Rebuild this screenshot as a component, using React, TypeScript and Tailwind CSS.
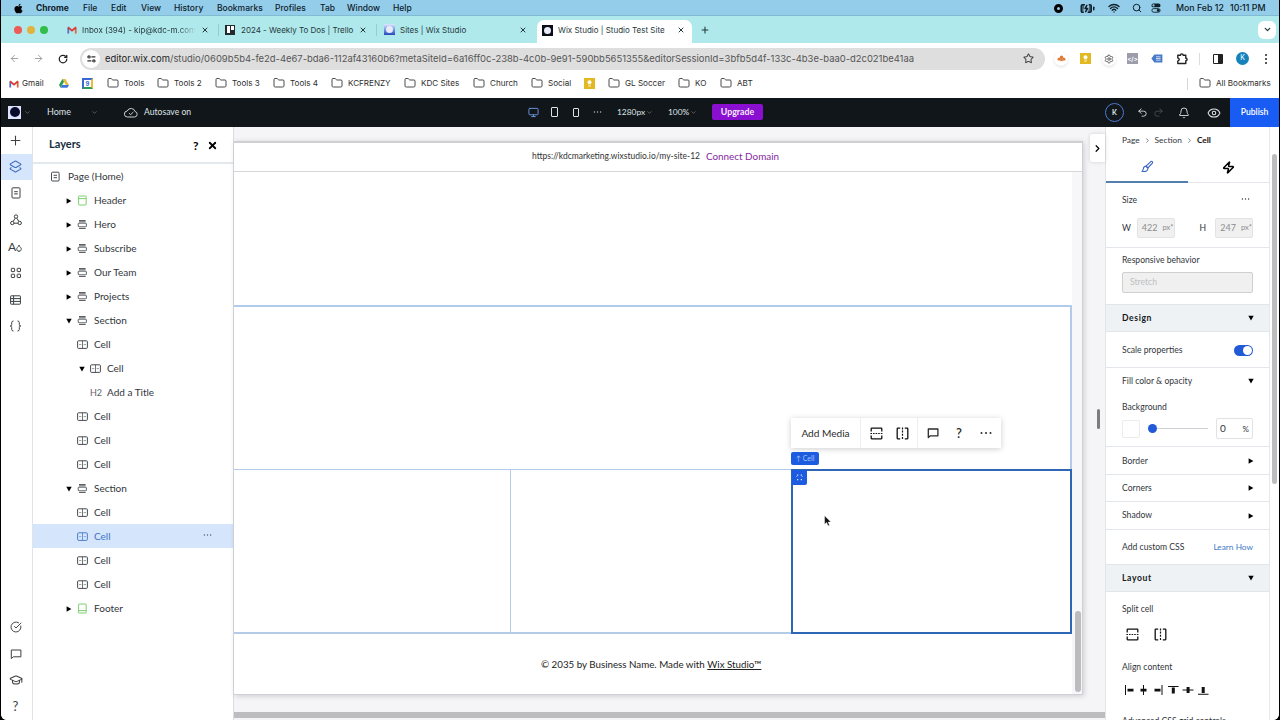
import type { ReactNode } from 'react';
import {
  ArrowLeft,
  ArrowRight,
  Bell,
  BatteryCharging,
  ChevronDown,
  ChevronRight,
  CircleCheckBig,
  Droplet,
  Eye,
  Folder,
  GraduationCap,
  Layers2,
  Lightbulb,
  Monitor,
  Plus,
  RotateCw,
  Search,
  Settings,
  Star,
  Undo2,
  Redo2,
  Wifi,
  X,
  Zap,
} from 'lucide-react';
import { FaApple } from 'react-icons/fa';

type LayerKind = 'page' | 'header' | 'section' | 'cell' | 'title' | 'footer';

interface Layer {
  label: string;
  kind: LayerKind;
  open?: boolean;
  arrow?: boolean;
  nested?: boolean;
  selected?: boolean;
}

const LAYERS: Layer[] = [
  { label: 'Header', kind: 'header', arrow: true },
  { label: 'Hero', kind: 'section', arrow: true },
  { label: 'Subscribe', kind: 'section', arrow: true },
  { label: 'Our Team', kind: 'section', arrow: true },
  { label: 'Projects', kind: 'section', arrow: true },
  { label: 'Section', kind: 'section', arrow: true, open: true },
  { label: 'Cell', kind: 'cell' },
  { label: 'Cell', kind: 'cell', arrow: true, open: true, nested: true },
  { label: 'Add a Title', kind: 'title', nested: true },
  { label: 'Cell', kind: 'cell' },
  { label: 'Cell', kind: 'cell' },
  { label: 'Cell', kind: 'cell' },
  { label: 'Section', kind: 'section', arrow: true, open: true },
  { label: 'Cell', kind: 'cell' },
  { label: 'Cell', kind: 'cell', selected: true },
  { label: 'Cell', kind: 'cell' },
  { label: 'Cell', kind: 'cell' },
  { label: 'Footer', kind: 'footer', arrow: true },
];

const MENU = [
  { label: 'Chrome', cls: 'w-[47px] font-bold' },
  { label: 'File', cls: 'w-[28px]' },
  { label: 'Edit', cls: 'w-[30px]' },
  { label: 'View', cls: 'w-[33px]' },
  { label: 'History', cls: 'w-[43px]' },
  { label: 'Bookmarks', cls: 'w-[58px]' },
  { label: 'Profiles', cls: 'w-[45px]' },
  { label: 'Tab', cls: 'w-[27px]' },
  { label: 'Window', cls: 'w-[46px]' },
  { label: 'Help', cls: 'w-[30px]' },
];

const FOLDERS_LEFT = [
  { label: 'Tools', cls: 'w-[50px]' },
  { label: 'Tools 2', cls: 'w-[58px]' },
  { label: 'Tools 3', cls: 'w-[58px]' },
  { label: 'Tools 4', cls: 'w-[58px]' },
  { label: 'KCFRENZY', cls: 'w-[73px]' },
  { label: 'KDC Sites', cls: 'w-[69px]' },
  { label: 'Church', cls: 'w-[58px]' },
  { label: 'Social', cls: 'w-[52px]' },
];

const FOLDERS_RIGHT = [
  { label: 'GL Soccer', cls: 'w-[70px]' },
  { label: 'KO', cls: 'w-[42px]' },
  { label: 'ABT', cls: 'w-[40px]' },
];

function Triangle({ open }: { open?: boolean }) {
  return (
    <svg width="6" height="6" viewBox="0 0 6 6" className="shrink-0 fill-black">
      {open ? <path d="M.3 .8h5.4L3 5.6z" /> : <path d="M.6 .3v5.4L5.4 3z" />}
    </svg>
  );
}

function Dots({ className = '' }: { className?: string }) {
  return (
    <svg width="9" height="4" viewBox="0 0 9 4" className={`shrink-0 fill-current ${className}`}>
      <circle cx="1.4" cy="2" r="0.7" />
      <circle cx="4.5" cy="2" r="0.7" />
      <circle cx="7.6" cy="2" r="0.7" />
    </svg>
  );
}

function ChatIcon({ bold }: { bold?: boolean }) {
  return (
    <svg width="12" height="12" viewBox="0 0 12 12" fill="none" stroke="currentColor" strokeWidth={bold ? 1.3 : 1} strokeLinejoin="round">
      <path d="M1.3 10.600V2h9.600v6.800H3.300z" />
    </svg>
  );
}

function LayerIcon({ kind }: { kind: LayerKind }) {
  if (kind === 'title') return <span className="text-[9px] text-[#5f6368]">H2</span>;
  return (
    <svg width="11" height="11" viewBox="0 0 11 11" fill="none" stroke="currentColor" strokeWidth="0.9" className="shrink-0">
      {kind === 'page' && (
        <>
          <rect x="1.5" y="1.2" width="7.6" height="8.8" rx="1" />
          <path d="M3.6 4.3h3.4M3.6 6.7h3.4" />
        </>
      )}
      {kind === 'header' && (
        <g stroke="#6fc95d">
          <rect x="1.6" y="1" width="7.6" height="9" rx="0.6" />
          <path d="M1.6 3.6h7.6" />
        </g>
      )}
      {kind === 'footer' && (
        <g stroke="#6fc95d">
          <rect x="1.6" y="1" width="7.6" height="9" rx="0.6" />
          <path d="M1.6 7.6h7.6" />
        </g>
      )}
      {kind === 'section' && (
        <g strokeWidth="0.8">
          <rect x="1.2" y="4.2" width="8.2" height="3.6" rx="0.8" />
          <path d="M2 1.500h6.600M2 2.800h6.600M2 9.500h6.600" />
        </g>
      )}
      {kind === 'cell' && (
        <>
          <rect x="0.6" y="1.8" width="9.8" height="7.6" rx="1" />
          <path d="M5.5 1.8v7.6" strokeWidth="0.7" />
          <path d="M2 5.6h2.4M6.6 5.6h2.4" strokeWidth="0.5" />
        </>
      )}
    </svg>
  );
}

function SplitRows() {
  return (
    <svg width="13" height="13" viewBox="0 0 13 13" fill="none" stroke="#111" strokeWidth="1.3">
      <path d="M1.2 4.4V1.7q0-.5.5-.5h9.6q.5 0 .5.5v2.7M1.2 8.6v2.7q0 .5.5.5h9.6q.5 0 .5-.5V8.6" />
      <path d="M.4 6.5h12.2" strokeDasharray="1.6 1" strokeWidth="1.1" />
    </svg>
  );
}

function SplitColumns() {
  return (
    <svg width="13" height="13" viewBox="0 0 13 13" fill="none" stroke="#111" strokeWidth="1.3">
      <path d="M4.2 1.2H1.7q-.5 0-.5.5v9.6q0 .5.5.5h2.5M8.8 1.2h2.5q.5 0 .5.5v9.6q0 .5-.5.5H8.8" />
      <path d="M6.5 .4v12.2" strokeDasharray="2 1.2" strokeWidth="1.2" />
    </svg>
  );
}

function GmailIcon() {
  return (
    <svg width="10" height="8" viewBox="0 0 11 9" fill="none" strokeWidth="2" className="shrink-0">
      <path d="M1.3 8.5V1.8" stroke="#5a6fc4" />
      <path d="M9.7 8.5V1.8" stroke="#d8683f" />
      <path d="M1 1.4l4.5 3.8L10 1.4" stroke="#d93a36" />
    </svg>
  );
}

function WixFavicon({ dark }: { dark?: boolean }) {
  return (
    <span className={`flex h-[11px] w-[11px] shrink-0 items-center justify-center ${dark ? 'bg-[#0b0d18]' : 'bg-linear-to-b from-[#dfe9ff] to-[#2546bb]'}`}>
      <span className="h-[7px] w-[7px] rounded-full bg-[#e9ebf8]" />
    </span>
  );
}

function FolderLink({ label, cls }: { label: string; cls: string }) {
  return (
    <span className={`flex shrink-0 items-center gap-[5px] whitespace-nowrap ${cls}`}>
      <Folder size={12} strokeWidth={2} className="shrink-0 text-[#4a4a4a]" />
      {label}
    </span>
  );
}

function MenuBar() {
  return (
    <div className="flex h-4 shrink-0 items-center border-b border-[#7fbcd2] bg-[#93cde9] pt-[1px] pl-[12px] text-[8.5px] font-medium text-[#10202b]">
      <FaApple size={11} className="mr-3 shrink-0 text-black" />
      {MENU.map((m) => (
        <span key={m.label} className={`shrink-0 ${m.cls}`}>
          {m.label}
        </span>
      ))}
      <div className="ml-auto flex items-center pr-[12px] whitespace-nowrap">
        <span className="mr-[17px] h-[9px] w-[9px] rounded-full border-[3px] border-black" />
        <BatteryCharging size={15} strokeWidth={2.4} className="mr-[13px] fill-[#10202b]/60" />
        <Wifi size={12} strokeWidth={2.8} className="mr-[12px]" />
        <Search size={10} strokeWidth={2.4} className="mr-[9px]" />
        <svg width="10" height="10" viewBox="0 0 10 10" className="mr-[15px]">
          <rect x="0.5" y="0.5" width="9" height="3.8" rx="1.9" fill="#10202b" />
          <rect x="0.9" y="5.6" width="8.2" height="3.6" rx="1.8" fill="none" stroke="#10202b" strokeWidth="0.9" />
          <circle cx="2.5" cy="2.4" r="1.1" fill="#93cde9" />
          <circle cx="7.2" cy="7.4" r="1.4" fill="#10202b" />
        </svg>
        <span className="w-[54px] text-[8.8px]">Mon Feb 12</span>
        <span className="w-[37px] text-[8.9px]">10:11 PM</span>
      </div>
    </div>
  );
}

function TabStrip() {
  return (
    <div className="flex h-[27px] shrink-0 items-center bg-[#afe9ec] pl-[13px] text-[8px] text-[#26383b]">
      <div className="flex w-[53px] gap-[5px]">
        <span className="h-2 w-2 rounded-full bg-[#ee5a55]" />
        <span className="h-2 w-2 rounded-full bg-[#e3b23e]" />
        <span className="h-2 w-2 rounded-full bg-[#32bd48]" />
      </div>
      <div className="flex h-3 w-[152px] items-center border-r border-[#8fd0d3]">
        <GmailIcon />
        <span className="ml-[5px] w-[114px] whitespace-nowrap [mask-image:linear-gradient(to_right,black_85%,transparent)]">
          Inbox (394) - kip@kdc-m.com
        </span>
        <X size={8} strokeWidth={3} className="ml-[5px]" />
      </div>
      <div className="flex h-3 w-[158px] items-center border-r border-[#8fd0d3] pl-[6px]">
        <span className="flex h-[10px] w-[10px] gap-[1px] bg-[#222a30] p-[1.5px]">
          <span className="h-[7px] w-[3px] bg-white" />
          <span className="h-[4px] w-[3px] bg-white" />
        </span>
        <span className="ml-[6px] w-[118px] whitespace-nowrap">2024 - Weekly To Dos | Trello</span>
        <X size={8} strokeWidth={3} />
      </div>
      <div className="flex w-[160px] items-center pl-[7px]">
        <WixFavicon />
        <span className="ml-[5px] w-[119px] whitespace-nowrap">Sites | Wix Studio</span>
        <X size={8} strokeWidth={3} />
      </div>
      <div className="mt-auto flex h-[23px] w-[155px] items-center rounded-t-[7px] bg-white pb-[3px] pl-[5px]">
        <WixFavicon dark />
        <span className="ml-[5px] w-[119px] whitespace-nowrap">Wix Studio | Studio Test Site</span>
        <X size={8} strokeWidth={3} />
      </div>
      <Plus size={10} strokeWidth={2.6} className="ml-2" />
      <span className="mr-[3px] ml-auto flex h-[18px] w-[18px] items-center justify-center rounded-[6px] bg-white">
        <ChevronDown size={9} strokeWidth={3.4} />
      </span>
    </div>
  );
}

function AddressBar() {
  return (
    <div className="flex h-[31px] shrink-0 items-center bg-white pl-[8px]">
      <ArrowLeft size={11} strokeWidth={2} className="text-[#9a9a9a]" />
      <ArrowRight size={11} strokeWidth={2} className="ml-[13px] text-[#9a9a9a]" />
      <RotateCw size={10} strokeWidth={3} className="ml-[14px] text-[#222]" />
      <div className="ml-[12px] flex h-[22px] w-[965px] items-center rounded-full bg-[#dedede] pl-[2px]">
        <span className="flex h-[18px] w-[18px] shrink-0 items-center justify-center rounded-full bg-white">
          <svg width="9" height="8" viewBox="0 0 9 8" fill="none" stroke="#333" strokeWidth="1.2">
            <circle cx="2" cy="1.9" r="1.1" />
            <path d="M4.4 1.9h4M.4 5.9h4" />
            <circle cx="6.9" cy="5.9" r="1.1" />
          </svg>
        </span>
        <span className="ml-[5px] w-[918px] pt-[1px] text-[9.43px] whitespace-nowrap text-[#555]">
          <span className="text-[#222]">editor.wix.com</span>
          /studio/0609b5b4-fe2d-4e67-bda6-112af43160b6?metaSiteId=6a16ff0c-238b-4c0b-9e91-590bb5651355&amp;editorSessionId=3bfb5d4f-133c-4b3e-baa0-d2c021be41aa
        </span>
        <Star size={11} strokeWidth={2.2} className="shrink-0 text-[#444]" />
      </div>
      <div className="ml-[9px] flex items-center">
        <span className="flex h-[14px] w-[14px] items-center justify-center rounded-full bg-white shadow">
          <svg width="9" height="7" viewBox="0 0 10 8" fill="#e07b39">
            <circle cx="5" cy="2.6" r="2" />
            <circle cx="2.2" cy="4.9" r="1.7" />
            <circle cx="7.8" cy="4.9" r="1.7" />
            <rect x="3.6" y="3" width="2.8" height="4" />
          </svg>
        </span>
        <span className="ml-[12px] flex h-[11px] w-[11px] items-center justify-center bg-[#e3b923] text-white">
          <Lightbulb size={7} fill="white" strokeWidth={2} />
        </span>
        <span className="ml-[11px] flex h-[14px] w-[14px] items-center justify-center rounded-full bg-white text-[#555] shadow">
          <Settings size={10} strokeWidth={2.2} />
        </span>
        <span className="ml-[11px] flex h-[11px] w-[11px] items-center justify-center bg-[#9c9cab] text-[6px] font-bold text-white">&lt;/&gt;</span>
        <svg width="12" height="9" viewBox="0 0 12 9" className="ml-[13px]">
          <path d="M3.4 .4h8v8h-8L.4 4.4z" fill="#4779c7" />
          <path d="M5 2.8h4.6M5 4.5h4.6M5 6.2h4.6" stroke="#e4eefc" strokeWidth="0.8" />
        </svg>
        <svg width="13" height="13" viewBox="0 0 13 13" fill="none" stroke="#222" strokeWidth="1.4" strokeLinejoin="round" className="ml-[13px]">
          <path d="M1.800 3.200h2.700a1.300 1.300 0 0 1 2.600 0h2.700v3a1.300 1.300 0 0 1 0 2.600v2.700H1.800V8.900a1.400 1.400 0 0 0 0-2.800z" />
        </svg>
        <span className="ml-[10px] h-3 w-px bg-[#dcdcdc]" />
        <span className="ml-[13px] h-[10px] w-[10px] rounded-[1px] border border-r-[5px] border-[#222]" />
        <span className="ml-[13px] flex h-[13px] w-[13px] items-center justify-center rounded-full bg-[#1583bb] text-[7px] text-white">K</span>
        <span className="ml-[16px] flex flex-col gap-[2px]">
          <span className="h-[2px] w-[2px] rounded-full bg-[#222]" />
          <span className="h-[2px] w-[2px] rounded-full bg-[#222]" />
          <span className="h-[2px] w-[2px] rounded-full bg-[#222]" />
        </span>
      </div>
    </div>
  );
}

function BookmarksBar() {
  return (
    <div className="flex h-[24px] shrink-0 items-center bg-white pb-[5px] pl-2 text-[8.1px] text-[#2e2e2e]">
      <GmailIcon />
      <span className="ml-[3px] w-[37px]">Gmail</span>
      <svg width="10" height="9" viewBox="0 0 10 9">
        <path d="M3.4 0h3.1L10 6H6.9z" fill="#e8bd3c" />
        <path d="M3.4 0L5 2.7 1.6 8.8 0 6z" fill="#2d9b55" />
        <path d="M3.2 6H10L8.4 8.8H1.6z" fill="#3f74dc" />
      </svg>
      <span className="ml-[13px] flex h-[11px] w-[11px] items-center justify-center border-2 border-t-[#3569d4] border-r-[#e8bd3c] border-b-[#2d9b55] border-l-[#3569d4] text-[6px] font-bold text-[#3569d4]">
        9
      </span>
      <div className="ml-[14px] flex">
        {FOLDERS_LEFT.map((f) => (
          <FolderLink key={f.label} {...f} />
        ))}
      </div>
      <span className="ml-[1px] flex h-[11px] w-[11px] items-center justify-center bg-[#e3b923] text-white">
        <Lightbulb size={7} fill="white" strokeWidth={2} />
      </span>
      <div className="ml-[13px] flex">
        {FOLDERS_RIGHT.map((f) => (
          <FolderLink key={f.label} {...f} />
        ))}
      </div>
      <span className="mr-[11px] ml-auto h-3 w-px bg-[#d6d6d6]" />
      <FolderLink label="All Bookmarks" cls="w-[80px]" />
    </div>
  );
}

function StudioBar() {
  return (
    <div className="flex h-[29px] shrink-0 items-center bg-[#11161a] pb-[1px] pl-[7px] font-['Lato',sans-serif] text-[9px] text-[#dfe3e6]">
      <span className="flex h-[13px] w-[13px] items-center justify-center bg-[#dfe3ff]">
        <span className="h-[10px] w-[10px] rounded-full bg-[#080b2a]" />
      </span>
      <ChevronDown size={7} className="ml-[3px] text-[#84898d]" />
      <span className="ml-[16px] w-[44px]">Home</span>
      <ChevronDown size={7} className="text-[#84898d]" />
      <svg width="14" height="11" viewBox="0 0 14 11" fill="none" stroke="currentColor" strokeWidth="0.9" className="ml-[26px]">
        <path d="M3.6 10h7a2.8 2.8 0 0 0 .5-5.5A4.2 4.2 0 0 0 3.2 4 3 3 0 0 0 3.6 10z" />
        <path d="M4.9 6l1.7 1.7L9.4 5" />
      </svg>
      <span className="ml-[6px] w-[384px] text-[8.6px]">Autosave on</span>
      <Monitor size={11} strokeWidth={2} className="text-[#6f9ae4]" />
      <span className="ml-[12px] h-[10px] w-[7px] rounded-[1px] border border-[#dfe3e6]" />
      <span className="ml-[15px] h-[9px] w-[6px] rounded-[1px] border border-[#dfe3e6]" />
      <Dots className="ml-[14px] text-[#b8bcc0]" />
      <span className="ml-[15px] w-[29px] text-[8.4px]">1280px</span>
      <ChevronDown size={7} className="text-[#84898d]" />
      <span className="ml-[15px] w-[22px] text-[8.4px]">100%</span>
      <ChevronDown size={7} className="text-[#84898d]" />
      <span className="ml-[15px] flex h-4 w-[51px] items-center justify-center rounded-[2px] bg-[#8a0fd0] text-[8.8px] font-bold text-[#f5e9fc]">Upgrade</span>
      <div className="ml-auto -mb-[1px] flex h-[29px] items-center">
        <span className="flex h-[19px] w-[19px] items-center justify-center rounded-full border-[1.5px] border-[#4c78cf] text-[7px] font-bold">K</span>
        <Undo2 size={11} strokeWidth={1.9} className="ml-[13px]" />
        <Redo2 size={11} strokeWidth={1.9} className="ml-[5px] text-[#4a5054]" />
        <Bell size={12} strokeWidth={1.8} className="ml-[14px]" />
        <Eye size={14} strokeWidth={1.8} className="ml-[17px]" />
        <span className="ml-[9px] flex h-full w-[49px] items-center justify-center bg-[#195cf4] text-[8.6px] font-semibold text-white">Publish</span>
      </div>
    </div>
  );
}

function RailItem({ children, active }: { children: ReactNode; active?: boolean }) {
  return (
    <span className={`flex h-[26.6px] items-center justify-center pr-[2px] ${active ? 'bg-[#d5e5fb] text-[#3e6bc0]' : 'text-[#3c4043]'}`}>{children}</span>
  );
}

function LeftRail() {
  return (
    <div className="flex w-[32px] shrink-0 flex-col border-r border-[#dfe3ea] bg-white">
      <RailItem><Plus size={15} strokeWidth={1.7} /></RailItem>
      <RailItem active><Layers2 size={13} strokeWidth={1.9} /></RailItem>
      <RailItem>
        <svg width="10" height="12" viewBox="0 0 10 12" fill="none" stroke="currentColor">
          <rect x="1" y="0.8" width="8" height="10.2" rx="0.8" />
          <path d="M3.2 4.7h3.6M3.2 6.9h3.6" />
        </svg>
      </RailItem>
      <RailItem>
        <svg width="12" height="12" viewBox="0 0 12 12" fill="none" stroke="currentColor">
          <circle cx="6" cy="2.6" r="1.7" />
          <circle cx="2.3" cy="9" r="1.7" />
          <circle cx="9.7" cy="9" r="1.7" />
          <path d="M5.2 4.2L3.1 7.5M6.8 4.2l2.1 3.3M4 9.2h4" />
        </svg>
      </RailItem>
      <RailItem>
        <span className="font-['Lato',sans-serif] text-[12px] leading-none">A</span>
        <Droplet size={8} strokeWidth={2.6} className="-ml-[1px] translate-y-[1px]" />
      </RailItem>
      <RailItem>
        <svg width="12" height="12" viewBox="0 0 12 12" fill="none" stroke="currentColor">
          <rect x="1.3" y="1.3" width="3.3" height="3.3" rx="0.5" />
          <rect x="7.2" y="1.3" width="3.3" height="3.3" rx="0.5" />
          <rect x="1.3" y="7.2" width="3.3" height="3.3" rx="0.5" />
          <rect x="7.2" y="7.2" width="3.3" height="3.3" rx="0.5" />
        </svg>
      </RailItem>
      <RailItem>
        <svg width="11" height="10" viewBox="0 0 11 10" fill="none" stroke="currentColor">
          <rect x="0.6" y="0.8" width="9.8" height="8.4" rx="0.5" />
          <path d="M.6 3.6h9.8M.6 6.4h9.8M3.6 .8v8.4" />
        </svg>
      </RailItem>
      <RailItem>
        <svg width="13" height="12" viewBox="0 0 13 12" fill="none" stroke="currentColor">
          <path d="M4.500 1q-1.800 0-1.800 1.500v2Q2.700 6 1.200 6q1.500 0 1.500 1.500v2Q2.700 11 4.500 11M8.500 1q1.800 0 1.800 1.500v2q0 1.500 1.500 1.500-1.500 0-1.500 1.500v2q0 1.500-1.800 1.500" />
        </svg>
      </RailItem>
      <div className="mt-auto">
        <RailItem><CircleCheckBig size={12} strokeWidth={1.9} /></RailItem>
        <RailItem><ChatIcon /></RailItem>
        <RailItem><GraduationCap size={14} strokeWidth={1.8} /></RailItem>
        <RailItem><span className="font-['Lato',sans-serif] text-[13px] leading-none">?</span></RailItem>
      </div>
    </div>
  );
}

function LayersPanel() {
  return (
    <div className="flex w-[200px] shrink-0 flex-col bg-white text-[#32363c]">
      <div className="flex h-[37px] items-center border-b-2 border-[#e3e8ed] pl-4 text-[#162d3d]">
        <span className="w-[144px] text-[11px] font-bold">Layers</span>
        <span className="w-[14px] pt-[2px] text-[12px] font-bold text-black">?</span>
        <X size={11} strokeWidth={4} className="mt-[2px] text-black" />
      </div>
      <div className="flex h-6 items-center gap-[7px] pt-[1px] pl-[17px]">
        <LayerIcon kind="page" />
        Page (Home)
      </div>
      {LAYERS.map((l, i) => (
        <div
          key={i}
          className={`flex h-6 items-center pt-[1px] ${l.nested ? 'pl-[46px]' : 'pl-[33px]'} ${l.selected ? 'bg-[#d5e5fb] text-[#3e74c4]' : ''}`}
        >
          <span className="flex w-[11px] shrink-0">{l.arrow && <Triangle open={l.open} />}</span>
          <span className="flex w-[17px] shrink-0">
            <LayerIcon kind={l.kind} />
          </span>
          {l.label}
          {l.selected && <Dots className="mr-[21px] mb-[3px] ml-auto text-[#4c5c74]" />}
        </div>
      ))}
    </div>
  );
}

function CellToolbar() {
  return (
    <div className="absolute -top-[53px] -left-[2px] flex h-[30px] w-[210px] items-center bg-white text-[#2b2b2b] shadow-[0_1px_6px_rgba(0,0,0,0.2)]">
      <span className="flex h-full w-[70px] items-center justify-center border-r border-[#eceef0] pt-[1px] text-[10.1px] whitespace-nowrap">Add Media</span>
      <span className="flex h-full w-[57px] items-center justify-center gap-[13px] border-r border-[#eceef0]">
        <SplitRows />
        <SplitColumns />
      </span>
      <span className="flex flex-1 items-center pl-[9px]">
        <ChatIcon bold />
        <span className="ml-[17px] w-[18px] text-[13px] leading-none font-semibold">?</span>
        <svg width="12" height="4" viewBox="0 0 12 4" className="ml-[6px] fill-current">
          <circle cx="1.5" cy="2" r="1" />
          <circle cx="6" cy="2" r="1" />
          <circle cx="10.5" cy="2" r="1" />
        </svg>
      </span>
    </div>
  );
}

function Canvas() {
  return (
    <div className="relative flex min-w-0 flex-1 flex-col border-l border-[#d9dbe0] bg-[#f5f5f7] pt-[14px]">
      <div className="flex h-[554px] w-[849px] flex-col border-t-2 border-r border-b border-[#cfcfd6] bg-white shadow-[1px_1px_5px_rgba(60,60,90,0.22)]">
        <div className="flex h-[29px] shrink-0 items-center border-b border-[#d4d6d9] pb-[1px] pl-[298px] whitespace-nowrap">
          <span className="w-[174px] text-[8.5px] text-[#333]">https://kdcmarketing.wixstudio.io/my-site-12</span>
          <span className="text-[9.9px] text-[#8427a0]">Connect Domain</span>
        </div>
        <div className="flex min-h-0 flex-1">
          <div className="flex w-[838px] flex-col">
            <div className="h-[133px] shrink-0" />
            <div className="h-[164px] shrink-0 border-t-2 border-r-2 border-[#b3cbeb]" />
            <div className="flex h-[165px] shrink-0">
              <div className="w-[277px] border-t border-r border-b-2 border-[#b3cbe6]" />
              <div className="w-[280px] border-t border-b-2 border-[#b3cbe6]" />
              <div className="relative flex-1 border-2 border-[#2e67b5] bg-white">
                <CellToolbar />
                <span className="absolute -top-[19px] -left-[2px] flex h-[13px] w-[28px] items-center justify-center rounded-[2px] bg-[#1d5be0] text-[7px] whitespace-nowrap text-[#a9c6f7]">
                  ↑ Cell
                </span>
                <span className="absolute -top-[1px] -left-[1px] flex h-[15px] w-[15px] items-center justify-center rounded-br-[2px] bg-[#1d5be0]">
                  <svg width="7" height="7" viewBox="0 0 7 7" fill="#cfdffb">
                    <path d="M1 .5h1.300v1.300H1zM4.700 .5H6v1.300H4.700zM.3 2.300h.9v.6H.3zM5.800 2.300h.9v.6h-.9zM1 5h1.300v1.300H1zM4.700 5H6v1.300H4.700z" />
                  </svg>
                </span>
                <svg width="8" height="12" viewBox="0 0 8 12" className="absolute top-[44px] left-[31px]">
                  <path d="M.6 .8v8.4l2-1.8 1.4 3.4 1.5-.6L4.1 7h2.8z" fill="#111" stroke="white" strokeWidth="0.4" />
                </svg>
              </div>
            </div>
            <div className="flex flex-1 items-center pl-[307px] text-[9.75px] whitespace-nowrap text-[#222]">
              © 2035 by Business Name. Made with&nbsp;<span className="underline">Wix Studio™</span>
            </div>
          </div>
          <div className="flex flex-1 flex-col items-end justify-end bg-[#f7f7f9] pr-[1px] pb-[2px]">
            <span className="h-[81px] w-[6px] rounded-full bg-[#bcbcbf]" />
          </div>
        </div>
      </div>
      <div className="mt-auto mb-[2px] h-[6px] bg-[#bdbdbf]" />
      <span className="absolute top-[7px] right-0 flex h-[28px] w-[15px] items-center justify-center rounded-l-[3px] bg-white shadow-[0_0_4px_rgba(0,0,0,0.15)]">
        <ChevronRight size={11} strokeWidth={2.6} />
      </span>
      <span className="absolute top-[282px] right-[5px] h-[20px] w-[3px] rounded-full bg-[#7c7c84]" />
    </div>
  );
}

function PanelRow({ label, open, cls }: { label: string; open?: boolean; cls: string }) {
  return (
    <div className={`flex shrink-0 items-center justify-between pr-[15px] pl-4 ${cls}`}>
      {label}
      <Triangle open={open} />
    </div>
  );
}

function SizeField({ value }: { value: string }) {
  return (
    <span className="flex h-[20px] w-[38px] items-center gap-[5px] rounded-[2px] border border-[#e3e3e3] bg-[#f0f0f0] pl-[4px] text-[9px] text-[#8d8d8d]">
      {value}
      <span className="text-[7.5px]">px*</span>
    </span>
  );
}

function AlignIcons() {
  return (
    <svg width="86" height="12" viewBox="0 0 86 12" className="fill-[#111]">
      <path d="M1 1h1v10H1zM3.5 4.8h6v2.6h-6z" />
      <path d="M16.5 4.8h6v2.6h-6zM19 1h1v10h-1z" />
      <path d="M30.5 4.8h6v2.6h-6zM37.5 1h1v10h-1z" />
      <path d="M44 2h10.500v1H44zM47.800 3.500h3v6h-3z" />
      <path d="M58.500 5.500h11v1h-11zM62.600 3h3v6h-3z" />
      <path d="M74 9.700h10.500v1H74zM77.700 3h3v6h-3z" />
    </svg>
  );
}

function Inspector() {
  return (
    <div className="flex w-[174px] shrink-0 border-l border-[#e1e4e9] bg-white text-[8.6px] text-[#32363c]">
      <div className="flex w-[164px] shrink-0 flex-col overflow-hidden border-r border-[#e6e8eb]">
        <div className="flex h-[27px] shrink-0 items-center gap-[4px] pl-4 text-[8.3px]">
          Page <ChevronRight size={7} /> Section <ChevronRight size={7} /> <b className="text-[#111]">Cell</b>
        </div>
        <div className="flex h-[29px] shrink-0 border-b border-[#e3e6ea]">
          <span className="-mb-px flex w-[82px] items-center justify-center border-b-2 border-[#527fae] pb-[2px]">
            <svg width="13" height="13" viewBox="0 0 13 13" fill="none" stroke="#3762c4" strokeWidth="1.1">
              <path d="M5 6.200L9.800 1.600q.8-.6 1.500.1t.1 1.500L6.900 8z" />
              <path d="M5 6.200L6.900 8q.2 2.200-1.500 3-1.900.8-4.200.2 1-.8 1.100-2.400T4 6.300z" />
            </svg>
          </span>
          <span className="flex flex-1 items-center justify-center pb-[2px] text-black">
            <Zap size={13} strokeWidth={2.8} />
          </span>
        </div>
        <div className="flex h-[65px] shrink-0 flex-col border-b border-[#e3e6ea] pt-[10px] pr-4 pl-4">
          <div className="flex h-[15px] items-center justify-between">
            Size <Dots className="-mt-[4px] mr-[3px]" />
          </div>
          <div className="mt-[10px] flex items-center">
            <span className="w-[15px]">W</span>
            <SizeField value="422" />
            <span className="ml-[25px] w-[16px]">H</span>
            <SizeField value="247" />
          </div>
        </div>
        <div className="flex h-[56px] shrink-0 flex-col pt-[5px] pr-[16px] pl-4">
          <span className="flex h-[14px] items-center">Responsive behavior</span>
          <span className="mt-[5px] flex h-[21px] items-center justify-between rounded-[2px] border border-[#cfcfcf] bg-[#f0f0f0] px-[7px] text-[#c0c0c0]">
            Stretch
          </span>
        </div>
        <PanelRow label="Design" open cls="h-[28px] border-y border-[#e1e6ea] bg-[#eef2f5] font-bold tracking-[0.6px] text-[#16191c]" />
        <div className="flex h-[36px] shrink-0 items-center justify-between border-b border-[#e3e6ea] px-4 pt-[1px]">
          Scale properties
          <span className="flex h-[11px] w-[19px] items-center justify-end rounded-full bg-[#2159d6] pr-[1px]">
            <span className="h-[9px] w-[9px] rounded-full bg-white" />
          </span>
        </div>
        <PanelRow label="Fill color & opacity" open cls="h-[26px]" />
        <div className="flex h-[53px] shrink-0 flex-col border-b border-[#e3e6ea] px-4 pt-[6px]">
          <span className="flex h-[14px] items-center">Background</span>
          <div className="mt-[4px] flex items-center">
            <span className="h-[18px] w-[18px] rounded-[2px] border border-[#ececec]" />
            <span className="ml-[8px] flex w-[60px] items-center">
              <span className="h-[9px] w-[9px] shrink-0 rounded-full bg-[#2159d6]" />
              <span className="h-px flex-1 bg-[#cfd2d6]" />
            </span>
            <span className="ml-auto flex h-[21px] w-[37px] items-center justify-between rounded-[2px] border border-[#e0e2e5] px-[3px] text-[10px]">
              0 <span className="text-[8px]">%</span>
            </span>
          </div>
        </div>
        <PanelRow label="Border" cls="h-[28px] border-b border-[#e3e6ea] pt-[1px]" />
        <PanelRow label="Corners" cls="h-[27px] border-b border-[#e3e6ea]" />
        <PanelRow label="Shadow" cls="h-[28px] border-b border-[#e3e6ea]" />
        <div className="flex h-[34px] shrink-0 items-center justify-between px-4">
          Add custom CSS <span className="text-[8.3px] text-[#3c7bc9]">Learn How</span>
        </div>
        <PanelRow label="Layout" open cls="h-[28px] border-y border-[#e1e6ea] bg-[#eef2f5] font-bold tracking-[0.6px] text-[#16191c]" />
        <div className="flex shrink-0 flex-col pl-4">
          <span className="flex h-[34px] items-center">Split cell</span>
          <span className="flex h-[17px] items-center gap-[15px] pl-[4px]">
            <SplitRows />
            <SplitColumns />
          </span>
          <span className="mt-[17px] flex h-[15px] items-center">Align content</span>
          <span className="mt-[9px] flex pl-[2px]"><AlignIcons /></span>
          <span className="mt-[19px] whitespace-nowrap">Advanced CSS grid controls</span>
        </div>
      </div>
      <div className="flex flex-1 justify-center pt-[27px]">
        <span className="h-[330px] w-[5px] rounded-full bg-[#bdbdc0]" />
      </div>
    </div>
  );
}

export default function App() {
  return (
    <div className="h-[720px] w-[1280px] overflow-hidden bg-black font-['Inter',sans-serif]">
      <div className="mx-px flex h-full flex-col overflow-hidden rounded-b-[6px] bg-white">
        <MenuBar />
        <TabStrip />
        <AddressBar />
        <BookmarksBar />
        <StudioBar />
        <div className="flex min-h-0 flex-1 font-['Lato',sans-serif] text-[10px]">
          <LeftRail />
          <LayersPanel />
          <Canvas />
          <Inspector />
        </div>
      </div>
    </div>
  );
}
